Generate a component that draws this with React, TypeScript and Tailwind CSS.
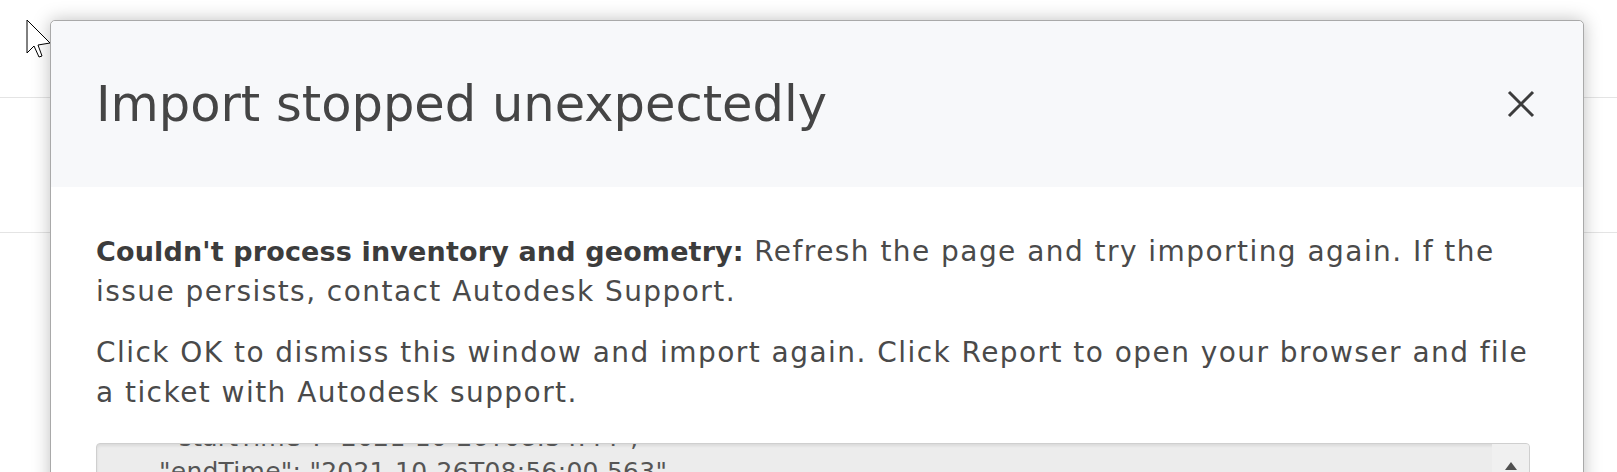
import React from 'react';

const App = () => {
  return (
    <div className="relative h-[472px] w-full overflow-hidden bg-white font-['DejaVu_Sans',sans-serif]">
      {/* page behind the dialog */}
      <div className="h-[98px] border-b border-[#e4e4e4]" />
      <div className="h-[135px] border-b border-[#e4e4e4]" />

      {/* dialog */}
      <div className="absolute left-[50px] top-[20px] w-[1534px] rounded-[5px] border border-[#a9a9a9] bg-white shadow-[0_0_18px_rgba(0,0,0,0.25)]">
        <div className="flex h-[166px] items-center justify-between rounded-t-[5px] bg-[#f7f8fa] pl-[45px] pr-[48px]">
          <h1 className="text-[49.5px] font-normal text-[#454545]">Import stopped unexpectedly</h1>
          <button className="flex h-[28px] w-[28px] items-center justify-center text-[#3c3c3c]">
            <svg width="28" height="28" viewBox="0 0 28 28" fill="none" stroke="currentColor" strokeWidth="3">
              <path d="M2 2 L26 26 M26 2 L2 26" />
            </svg>
          </button>
        </div>

        <div className="pl-[45px] pr-[53px] pt-[45px] text-[28px] leading-[40px] tracking-[1.45px] text-[#4a4a4a]">
          <p>
            <span className="text-[27px] font-bold tracking-[0.15px] text-[#3c3c3c]">Couldn't process inventory and geometry:</span> Refresh the page and try importing again. If the
            <br />
            issue persists, contact Autodesk Support.
          </p>
          <p className="mt-[21px]">
            Click OK to dismiss this window and import again. Click Report to open your browser and file
            <br />
            a ticket with Autodesk support.
          </p>

          {/* log box */}
          <div className="mt-[30px] flex h-[120px] overflow-hidden rounded-[4px] border border-[#cfcfcf] bg-[#ececec] shadow-[inset_0_2px_3px_rgba(0,0,0,0.08)]">
            <div className="flex-1 pl-[62px] text-[25px] leading-[34px] tracking-[0.25px] text-[#555555]">
              <div className="-mt-[23px] whitespace-pre">
                <div> "startTime": "2021-10-26T08:54:44",</div>
                <div>"endTime": "2021-10-26T08:56:00.563",</div>
                <div>"status": "failed"</div>
              </div>
            </div>
            <div className="flex w-[37px] justify-center bg-[#f0f0f0] pt-[18px]">
              <svg width="12" height="8" viewBox="0 0 12 8">
                <path d="M6 0 L12 8 L0 8 Z" fill="#505050" />
              </svg>
            </div>
          </div>
        </div>
      </div>

      {/* mouse cursor */}
      <svg className="absolute left-[26px] top-[19px]" width="26" height="40" viewBox="0 0 26 40">
        <path
          d="M1 1 L1 34 L8 27 L13 38 L16 37 L12 26 L24 24 Z"
          fill="#ffffff"
          stroke="#000000"
          strokeWidth="1"
          strokeLinejoin="miter"
        />
      </svg>
    </div>
  );
};

export default App;
